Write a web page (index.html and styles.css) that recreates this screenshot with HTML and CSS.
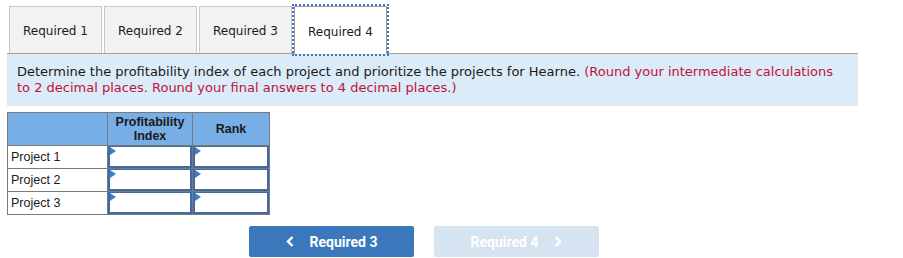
FILE: index.html
```html
<!DOCTYPE html>
<html>
<head>
<meta charset="utf-8">
<link rel="stylesheet" href="styles.css">
</head>
<body>
<div class="page">
  <div class="tabs">
    <div class="tab">Required 1</div>
    <div class="tab">Required 2</div>
    <div class="tab">Required 3</div>
    <div class="tab active">Required 4</div>
  </div>
  <div class="instructions">
    Determine the profitability index of each project and prioritize the projects for Hearne. <span class="note">(Round your intermediate calculations to 2 decimal places. Round your final answers to 4 decimal places.)</span>
  </div>
  <table class="grid">
    <thead>
      <tr>
        <th class="blank"></th>
        <th class="c2">Profitability<br>Index</th>
        <th class="c3">Rank</th>
      </tr>
    </thead>
    <tbody>
      <tr><td class="label">Project 1</td><td class="cell"><div class="input"></div></td><td class="cell"><div class="input"></div></td></tr>
      <tr><td class="label">Project 2</td><td class="cell"><div class="input"></div></td><td class="cell"><div class="input"></div></td></tr>
      <tr><td class="label">Project 3</td><td class="cell"><div class="input"></div></td><td class="cell"><div class="input"></div></td></tr>
    </tbody>
  </table>
  <div class="nav">
    <button class="btn prev"><svg class="chev" width="8" height="11" viewBox="0 0 8 11"><path d="M6.5 1 L2 5.5 L6.5 10" fill="none" stroke="#ffffff" stroke-width="2.4"/></svg><span class="blabel">Required 3</span></button>
    <button class="btn next"><span class="blabel">Required 4</span><svg class="chev" width="8" height="11" viewBox="0 0 8 11"><path d="M1.5 1 L6 5.5 L1.5 10" fill="none" stroke="#ffffff" stroke-width="2.4"/></svg></button>
  </div>
</div>
</body>
</html>
```

FILE: styles.css
```css
html, body {
  margin: 0;
  padding: 0;
  background: #ffffff;
}
.page {
  padding: 6px 45px 0 7px;
}
.tabs {
  display: flex;
  gap: 2px;
  padding-left: 2px;
  border-bottom: 1px solid #a0a0a0;
  height: 47px;
}
.tab {
  box-sizing: border-box;
  width: 93px;
  height: 47px;
  padding-top: 2px;
  background: #f2f2f2;
  border: 1px solid #c8c8c8;
  border-bottom: none;
  font-family: "DejaVu Sans", Verdana, sans-serif;
  font-size: 12px;
  color: #1a1a1a;
  display: flex;
  align-items: center;
  justify-content: center;
}
.tab.active {
  background: #ffffff;
  border-color: #999999;
  outline: 2px dotted #3a78c4;
  outline-offset: 0px;
  height: 48px;
}
.instructions {
  background: #dbebf8;
  padding: 10px 10px 10px 10px;
  font-family: "DejaVu Sans", Verdana, sans-serif;
  font-size: 13px;
  line-height: 16px;
  color: #1a1a1a;
}
.note {
  color: #c0123c;
}
.grid {
  margin-top: 6px;
  border-collapse: collapse;
  font-family: "Liberation Sans", Arial, sans-serif;
  font-size: 12.5px;
}
.grid th {
  background: #77aee6;
  border: 1px solid #7a7a7a;
  font-weight: bold;
  color: #1a1a1a;
  height: 32px;
  line-height: 14px;
  padding: 0;
}
.grid th.blank { width: 99px; }
.grid th.c2 { width: 84px; }
.grid th.c3 { width: 76px; }
.grid td {
  border: 1px solid #7a7a7a;
  height: 22px;
  padding: 0;
}
.grid td.label {
  padding-left: 3px;
  color: #1a1a1a;
}
.grid td.cell {
  padding: 0;
}
.input {
  box-sizing: border-box;
  height: 22px;
  border: 2px solid #3f6aa3;
  border-top-width: 1px;
  background: #ffffff;
  position: relative;
}
.input::before {
  content: "";
  position: absolute;
  left: 0;
  top: 0;
  width: 0;
  height: 0;
  border-top: 4px solid transparent;
  border-bottom: 4px solid transparent;
  border-left: 6px solid #3a7fcf;
}
.nav {
  display: flex;
  gap: 20px;
  padding-left: 242px;
  margin-top: 11px;
}
.btn {
  width: 165px;
  height: 31px;
  border: none;
  border-radius: 2px;
  font-family: Roboto, "Liberation Sans", sans-serif;
  font-weight: bold;
  font-size: 14px;
  color: #ffffff;
  display: flex;
  align-items: center;
  justify-content: center;
  gap: 16px;
  padding: 0;
}
.btn.prev {
  background: #3a77bb;
}
.btn.next {
  background: #d6e3f1;
}
.chev {
  display: block;
}
```
